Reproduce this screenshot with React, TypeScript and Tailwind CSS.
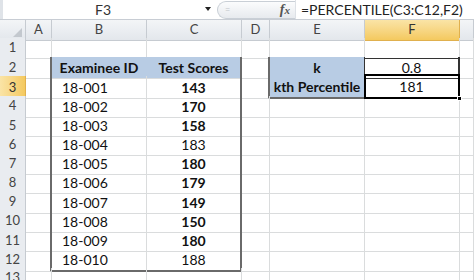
import React from "react";

const cols = ["A", "B", "C", "D", "E", "F", ""];

type Cell = { text?: string; bold?: boolean; align?: "left" | "center"; fill?: boolean };

const data: { id: string; score: string; bold: boolean }[] = [
  { id: "18-001", score: "143", bold: true },
  { id: "18-002", score: "170", bold: true },
  { id: "18-003", score: "158", bold: true },
  { id: "18-004", score: "183", bold: false },
  { id: "18-005", score: "180", bold: true },
  { id: "18-006", score: "179", bold: true },
  { id: "18-007", score: "149", bold: true },
  { id: "18-008", score: "150", bold: true },
  { id: "18-009", score: "180", bold: true },
  { id: "18-010", score: "188", bold: false },
];

const grid = "grid grid-cols-[26px_26px_95px_95px_28px_95px_95px_1fr]";
const gl = "border-r border-b border-[#dadcdd]";

function rowCells(r: number): { cls: string; content?: React.ReactNode }[] {
  // A B C D E F G
  const cells: { cls: string; content?: React.ReactNode }[] = [];
  const inTable = r >= 2 && r <= 12;
  // A
  cells.push({ cls: inTable ? "border-b border-b-[#dadcdd] border-r-2 border-r-[#6a6a6a]" : gl });
  // B
  let bCls = gl;
  let bContent: React.ReactNode = null;
  if (r === 1) bCls = "border-r border-r-[#dadcdd] border-b-2 border-b-[#6a6a6a]";
  if (r === 2) {
    bCls = "bg-[#b8cce4] border-r border-r-[#b8cce4] border-b border-b-[#dadcdd] justify-center font-bold";
    bContent = "Examinee ID";
  }
  if (r >= 3 && r <= 12) {
    const d = data[r - 3];
    bCls = r === 12 ? "border-r border-r-[#dadcdd] border-b-2 border-b-[#6a6a6a] pl-[10px]" : gl + " pl-[10px]";
    bContent = d.id;
  }
  cells.push({ cls: bCls, content: bContent });
  // C
  let cCls = gl;
  let cContent: React.ReactNode = null;
  if (r === 1) cCls = "border-r border-r-[#dadcdd] border-b-2 border-b-[#6a6a6a]";
  if (r === 2) {
    cCls = "bg-[#b8cce4] border-r-2 border-r-[#6a6a6a] border-b border-b-[#dadcdd] justify-center font-bold";
    cContent = "Test Scores";
  }
  if (r >= 3 && r <= 12) {
    const d = data[r - 3];
    cCls =
      "justify-center border-r-2 border-r-[#6a6a6a] " +
      (r === 12 ? "border-b-2 border-b-[#6a6a6a]" : "border-b border-b-[#dadcdd]") +
      (d.bold ? " font-bold" : "");
    cContent = d.score;
  }
  cells.push({ cls: cCls, content: cContent });
  // D
  cells.push({ cls: r === 2 || r === 3 ? "border-b border-b-[#dadcdd] border-r-2 border-r-[#6a6a6a]" : gl });
  // E
  let eCls = gl;
  let eContent: React.ReactNode = null;
  if (r === 1) eCls = "border-r border-r-[#dadcdd] border-b-2 border-b-[#6a6a6a]";
  if (r === 2) {
    eCls = "bg-[#b8cce4] border-r border-r-[#333] border-b border-b-[#b8cce4] justify-center font-bold";
    eContent = "k";
  }
  if (r === 3) {
    eCls = "bg-[#b8cce4] border-r border-r-[#333] border-b-2 border-b-[#6a6a6a] justify-center font-bold";
    eContent = "kth Percentile";
  }
  cells.push({ cls: eCls, content: eContent });
  // F
  let fCls = gl;
  let fContent: React.ReactNode = null;
  if (r === 1) fCls = "border-r border-r-[#dadcdd] border-b border-b-[#333]";
  if (r === 2) {
    fCls = "border-r-2 border-r-[#333] border-b border-b-[#333] justify-center";
    fContent = "0.8";
  }
  if (r === 3) {
    fCls = "border-r-2 border-r-[#333] border-b-2 border-b-[#333] justify-center relative";
    fContent = (
      <>
        181
        <span className="absolute -left-[1px] -top-[2px] -right-[2px] -bottom-[2px] border-2 border-black pointer-events-none" />
        <span className="absolute -right-[4px] -bottom-[4px] w-[5px] h-[5px] bg-black border border-white" />
      </>
    );
  }
  cells.push({ cls: fCls, content: fContent });
  // G
  cells.push({ cls: gl });
  return cells;
}

export default function App() {
  const rows = Array.from({ length: 13 }, (_, i) => i + 1);
  return (
    <div className="w-[474px] h-[280px] overflow-hidden bg-white font-['Lato','Liberation_Sans',sans-serif] text-[#111] text-[14px]">
      {/* Formula bar */}
      <div className="flex h-[20px] items-center border-b border-[#c8cdd4] bg-white">
        <div className="w-[3px] h-full bg-[#dfe3e8]" />
        <div className="w-[200px] text-center text-[14px] text-[#333] leading-[20px]">F3</div>
        <svg width="10" height="20" viewBox="0 0 10 20" className="ml-[0px]">
          <path d="M2 7 L8 7 L5 11 Z" fill="#222" />
        </svg>
        <div className="ml-[4px] h-[18px] w-[78px] rounded-l-full border border-r-0 border-[#c9cfd6] bg-gradient-to-b from-[#fbfcfd] to-[#e7eaee] flex items-center">
          <span className="ml-[7px] text-[9px] text-[#c0c4c8] leading-none">=</span>
          <span className="ml-auto mr-[5px] font-['Liberation_Serif',serif] italic font-bold text-[14px] text-[#555] leading-none">
            f<span className="text-[11px]">x</span>
          </span>
        </div>
        <div className="h-full w-[1px] bg-[#dde1e6]" />
        <div className="pl-[5px] text-[14px] text-[#222] leading-[20px]">=PERCENTILE(C3:C12,F2)</div>
      </div>

      {/* Column headers */}
      <div className={grid + " h-[18px]"}>
        <div className="bg-gradient-to-b from-[#f3f5f7] to-[#e3e7ec] border-r border-b border-[#c6cbd1] flex items-end justify-end pr-[3px] pb-[3px]">
          <svg width="9" height="9" viewBox="0 0 9 9">
            <path d="M9 0 L9 9 L0 9 Z" fill="#c3c8ce" />
          </svg>
        </div>
        {cols.map((c, i) => (
          <div
            key={i}
            className={
              "flex items-center justify-center text-[13px] border-r border-b " +
              (c === "F"
                ? "bg-gradient-to-b from-[#fae4a6] to-[#f4c95e] border-[#e0b04e] text-[#333]"
                : "bg-gradient-to-b from-[#f3f5f7] to-[#e3e7ec] border-[#c6cbd1] text-[#444]")
            }
          >
            {c}
          </div>
        ))}
      </div>

      {rows.map((r) => (
        <div key={r} className={grid + " h-[19.2px]"}>
          <div
            className={
              "flex items-center justify-center text-[13px] border-r border-b " +
              (r === 3
                ? "bg-gradient-to-r from-[#fae4a6] to-[#f4c95e] border-[#e0b04e] text-[#333]"
                : "bg-[#e9ecf0] border-[#c6cbd1] text-[#444]")
            }
          >
            {r}
          </div>
          {rowCells(r).map((c, i) => (
            <div key={i} className={"flex items-center whitespace-nowrap overflow-visible " + c.cls}>
              {c.content}
            </div>
          ))}
        </div>
      ))}
    </div>
  );
}
